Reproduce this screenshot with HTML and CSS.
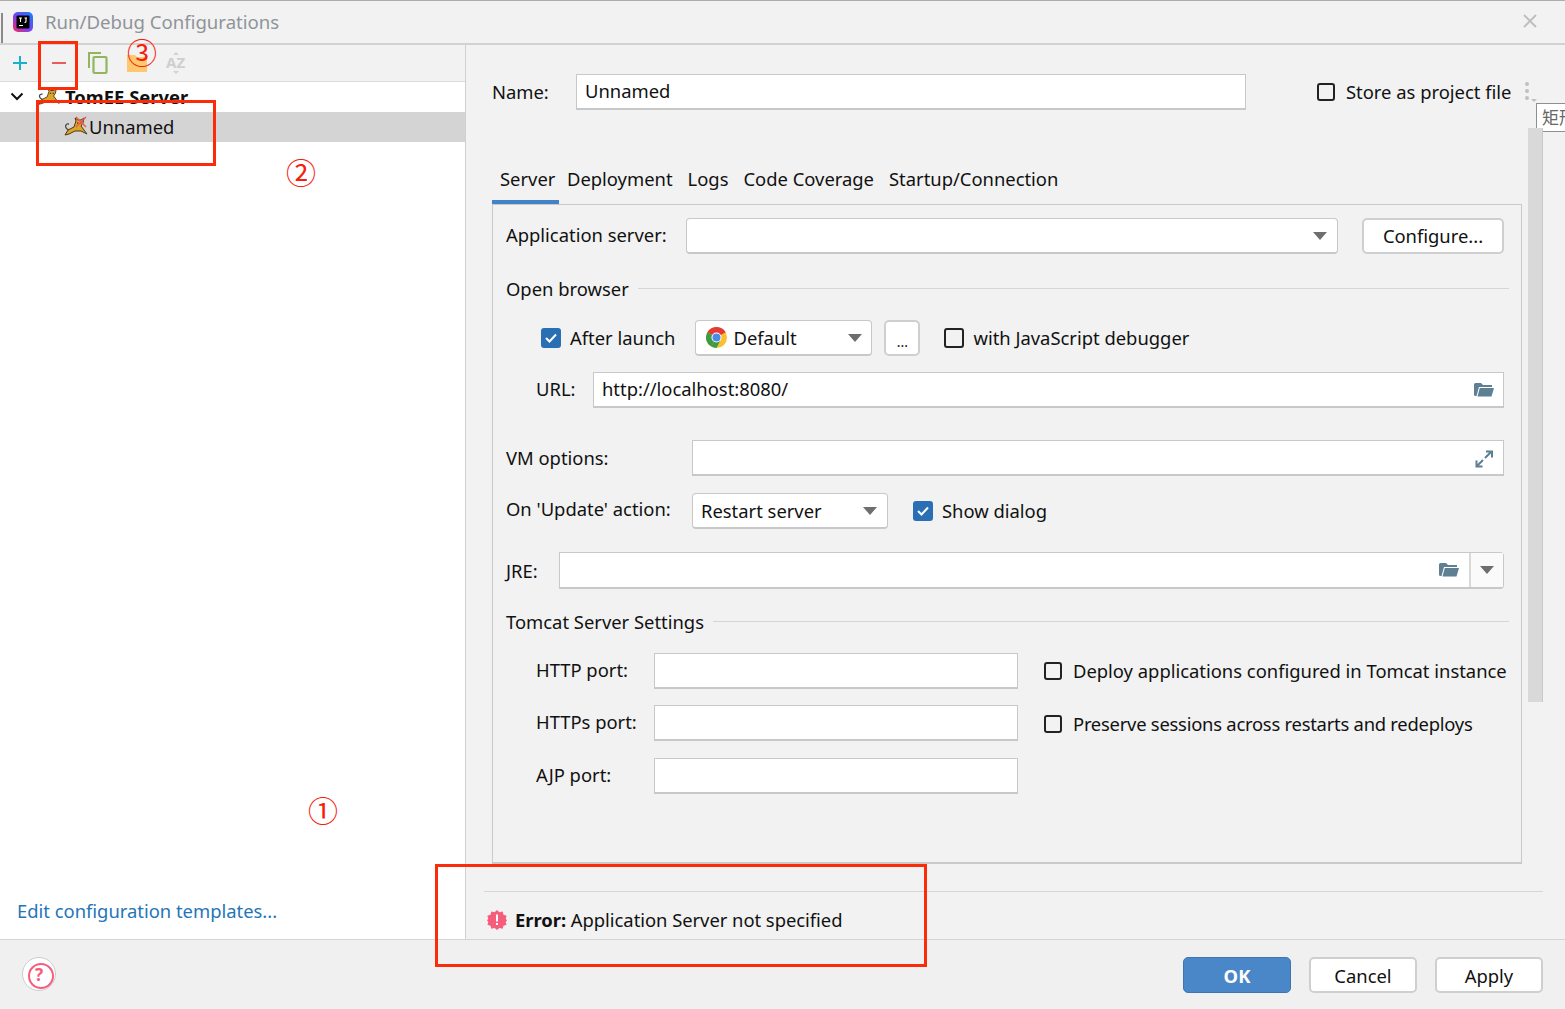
FILE: index.html
```html
<!DOCTYPE html>
<html lang="en">
<head>
<meta charset="utf-8">
<title>Run/Debug Configurations</title>
<link rel="stylesheet" href="styles.css">
</head>
<body>
<svg class="defs" width="0" height="0" aria-hidden="true">
  <defs>
    <g id="cat">
      <path d="M5 14 C0 12 1 7 5 8" fill="none" stroke="#444" stroke-width="1.300"/>
      <path d="M1 19 L4 14 L10 11 L12 5 L11 2 L14 4 L17 4 L20 2 L19 7 L17 10 L23 18 L17 15 L11 15 L5 18 Z" fill="#dca52a" stroke="#4a3812" stroke-width="1"/>
      <path d="M13 7h1.400M16 7h1.400" stroke="#222" stroke-width="1.200"/>
    </g>
    <g id="folder">
      <path d="M1 3.500 Q1 2 2.500 2 H8 L10 4 H19 V6 H6 L3.500 15 H2.500 Q1 15 1 13.500 Z" fill="#5f7f92"/>
      <path d="M6.800 7 H21 L18.500 15.500 H4.500 Z" fill="#5f7f92"/>
    </g>
  </defs>
</svg>
<div class="window">
  <header class="titlebar">
    <span class="caret-mark"></span>
    <svg class="app-logo" width="20" height="20" viewBox="0 0 20 20">
      <defs>
        <linearGradient id="logoGrad" x1="0" y1="1" x2="1" y2="0">
          <stop offset="0" stop-color="#fe2857"/><stop offset=".45" stop-color="#7b3ff2"/><stop offset="1" stop-color="#0a84ff"/>
        </linearGradient>
      </defs>
      <rect width="20" height="20" rx="5" fill="url(#logoGrad)"/>
      <rect x="3.500" y="3.500" width="13" height="13" rx="1" fill="#000"/>
      <path d="M6 6h3M7.500 6v4M11.500 6h2.500M13 6v3.500q0 1-1.500 1M6 13.500h4" stroke="#fff" stroke-width="1.100" fill="none"/>
    </svg>
    <span class="title-text">Run/Debug Configurations</span>
    <svg class="close" width="14" height="14" viewBox="0 0 14 14"><path d="M1 1L13 13M13 1L1 13" stroke="#bdbdbd" stroke-width="1.800"/></svg>
  </header>

  <div class="main">
    <aside class="sidebar">
      <div class="toolbar">
        <svg width="14" height="14" viewBox="0 0 14 14"><path d="M7 0V14M0 7H14" stroke="#17b3c9" stroke-width="2"/></svg>
        <svg class="tb-minus" width="14" height="14" viewBox="0 0 14 14"><path d="M0 7H14" stroke="#e85c5c" stroke-width="2"/></svg>
        <svg class="tb-copy" width="20" height="24" viewBox="0 0 20 24"><path d="M1 17V2H13" fill="none" stroke="#92b65f" stroke-width="2"/><rect x="5.500" y="6" width="13" height="16" rx="1" fill="none" stroke="#92b65f" stroke-width="2.200"/></svg>
        <svg class="tb-folder" width="20" height="19" viewBox="0 0 20 19"><path d="M0 2H8L10 4H20V19H0Z" fill="#ffc86e"/></svg>
        <svg class="tb-az" width="20" height="24" viewBox="0 0 20 24"><path d="M7 4L10 1L13 4ZM7 20L10 23L13 20Z" fill="#d2d2d2"/><text x="0" y="17" class="az-text">AZ</text></svg>
      </div>
      <div class="tree">
        <div class="tree-row tree-group">
          <svg class="chev" width="14" height="9" viewBox="0 0 14 9"><path d="M1.500 1.500L7 7L12.500 1.500" fill="none" stroke="#111" stroke-width="2"/></svg>
          <svg class="cat-g" width="22" height="20" viewBox="0 0 24 20"><use href="#cat"/></svg>
          <span>TomEE Server</span>
        </div>
        <div class="tree-row tree-item">
          <svg class="cat-i" width="24" height="20" viewBox="0 0 24 20"><use href="#cat"/><path d="M12 1L22 11M22 1L12 11" stroke="#f0565a" stroke-width="1.500"/></svg>
          <span>Unnamed</span>
        </div>
      </div>
      <a class="templates" href="#">Edit configuration templates...</a>
    </aside>

    <section class="content">
      <div class="name-row">
        <label class="name-label">Name:</label>
        <div class="field name-field">Unnamed</div>
        <span class="check store"><i class="box"></i>Store as project file</span>
        <span class="dots"><b></b><b></b><b></b></span>
        <i class="dots-tri"></i>
      </div>
      <nav class="tabs">
        <span class="tab active">Server</span>
        <span class="tab">Deployment</span>
        <span class="tab">Logs</span>
        <span class="tab">Code Coverage</span>
        <span class="tab">Startup/Connection</span>
      </nav>
      <div class="panel">
        <div class="row">
          <label class="lbl w-app">Application server:</label>
          <div class="field combo app-combo"><i class="tri"></i></div>
          <button class="btn configure">Configure...</button>
        </div>
        <div class="section s-open"><span>Open browser</span><hr></div>
        <div class="row r-after">
          <span class="check"><i class="box on"><svg width="14" height="12" viewBox="0 0 14 12"><path d="M2 6L5.500 9.500L12 2.500" fill="none" stroke="#fff" stroke-width="2"/></svg></i>After launch</span>
          <div class="field combo default-combo">
            <svg class="chrome" width="21" height="21" viewBox="0 0 21 21">
              <circle cx="10.500" cy="10.500" r="10.500" fill="#fbc02d"/>
              <path d="M10.500 10.500L1.400 5.250A10.500 10.500 0 0 1 19.600 5.250Z" fill="#e53935"/>
              <path d="M10.500 10.500L1.400 5.250A10.500 10.500 0 0 0 5.250 19.600Z" fill="#3d9b46"/>
              <path d="M10.500 10.500L5.250 19.600A10.500 10.500 0 0 0 10.500 21L14 14Z" fill="#3d9b46"/>
              <circle cx="10.500" cy="10.500" r="5" fill="#fff"/><circle cx="10.500" cy="10.500" r="4" fill="#4a8be8"/>
            </svg>
            <span>Default</span><i class="tri"></i>
          </div>
          <button class="btn dots-btn">...</button>
          <span class="check js"><i class="box"></i>with JavaScript debugger</span>
        </div>
        <div class="row r-url">
          <label class="lbl w-url">URL:</label>
          <div class="field url-field"><span class="ftext">http://localhost:8080/</span><svg class="ficon" width="22" height="17" viewBox="0 0 22 17"><use href="#folder"/></svg></div>
        </div>
        <div class="row r-vm">
          <label class="lbl w-vm">VM options:</label>
          <div class="field grow"><svg class="ficon" width="20" height="20" viewBox="0 0 20 20"><path d="M11 9L17 3M12 2.500H18V8.500M9 11L3 17M2.500 11.500V17.500H8.500" fill="none" stroke="#5f7f92" stroke-width="2"/></svg></div>
        </div>
        <div class="row r-upd">
          <label class="lbl w-vm">On 'Update' action:</label>
          <div class="field combo restart-combo"><span>Restart server</span><i class="tri"></i></div>
          <span class="check show"><i class="box on"><svg width="14" height="12" viewBox="0 0 14 12"><path d="M2 6L5.500 9.500L12 2.500" fill="none" stroke="#fff" stroke-width="2"/></svg></i>Show dialog</span>
        </div>
        <div class="row r-jre">
          <label class="lbl w-jre">JRE:</label>
          <div class="field jre-field"><svg class="ficon" width="22" height="17" viewBox="0 0 22 17"><use href="#folder"/></svg><span class="jre-drop"><i class="tri"></i></span></div>
        </div>
        <div class="section s-tomcat"><span>Tomcat Server Settings</span><hr></div>
        <div class="row r-http">
          <label class="lbl w-port">HTTP port:</label>
          <div class="field port"></div>
          <span class="check deploy"><i class="box"></i>Deploy applications configured in Tomcat instance</span>
        </div>
        <div class="row r-https">
          <label class="lbl w-port">HTTPs port:</label>
          <div class="field port"></div>
          <span class="check deploy preserve"><i class="box"></i>Preserve sessions across restarts and redeploys</span>
        </div>
        <div class="row r-ajp">
          <label class="lbl w-port">AJP port:</label>
          <div class="field port"></div>
        </div>
      </div>
      <div class="error">
        <svg width="20" height="20" viewBox="0 0 20 20"><path d="M10 0L12.400 2.300L15.600 1.500L16.500 4.700L19.600 5.700L18.700 8.900L20 10L18.700 12.400L19.600 14.800L16.500 15.800L15.600 18.700L12.400 18L10 20L7.600 18L4.400 18.700L3.500 15.800L.4 14.800L1.300 12.400L0 10L1.300 8.900L.4 5.700L3.500 4.700L4.400 1.500L7.600 2.300Z" fill="#f65c7b"/><rect x="9" y="4.500" width="2" height="7" fill="#fff"/><rect x="9" y="13" width="2" height="2" fill="#fff"/></svg>
        <span class="err-text"><b>Error:</b> Application Server not specified</span>
      </div>
    </section>
  </div>

  <footer class="footer">
    <span class="help">?</span>
    <div class="actions">
      <button class="btn act primary">OK</button>
      <button class="btn act">Cancel</button>
      <button class="btn act">Apply</button>
    </div>
  </footer>

  <div class="tooltip">矩形</div>
  <div class="scrollbar"></div>
  <div class="mark m-minus"></div>
  <div class="mark m-item"></div>
  <div class="mark m-error"></div>
  <span class="num n1">①</span>
  <span class="num n2">②</span>
  <span class="num n3">③</span>
</div>
</body>
</html>
```

FILE: styles.css
```css
* { box-sizing: border-box; }
html, body { margin: 0; padding: 0; }
body { width: 1565px; height: 1009px; overflow: hidden; font-family: "Noto Sans", "Noto Sans CJK SC", sans-serif; font-size: 18.4px; color: #111; background: #f2f2f2; }
.defs { position: absolute; }
.window { position: relative; width: 1565px; height: 1009px; display: flex; flex-direction: column; }

.titlebar { height: 45px; flex: none; display: flex; align-items: center; border-top: 1px solid #acacac; border-bottom: 2px solid #d2d2d2; background: #f2f2f2; }
.caret-mark { width: 2px; height: 30px; margin: 12px 0 0 1px; background: #8a8a8a; }
.app-logo { margin-left: 10px; margin-top: -1px; }
.title-text { margin-left: 12px; color: #8f9499; font-size: 18.6px; line-height: 24px; }
.close { margin-left: auto; margin-right: 28px; margin-top: -2px; }

.main { flex: 1; display: flex; min-height: 0; }
.sidebar { width: 466px; flex: none; background: #fff; border-right: 1px solid #d0d0d0; display: flex; flex-direction: column; }
.toolbar { height: 37px; flex: none; display: flex; align-items: center; padding-left: 13px; background: #f2f2f2; border-bottom: 1px solid #dcdcdc; }
.tb-minus { margin-left: 25px; }
.tb-copy { margin-left: 22px; }
.tb-folder { margin-left: 19px; margin-top: -2px; }
.tb-az { margin-left: 19px; }
.az-text { font-size: 15px; font-weight: 700; fill: #cfcfcf; font-family: "Noto Sans", sans-serif; }

.tree { flex: 1; }
.tree-row { display: flex; align-items: center; }
.tree-group { height: 30px; font-weight: 700; padding-left: 10px; padding-bottom: 2px; }
.cat-g { margin-left: 14px; margin-right: 5px; }
.tree-item { height: 30px; background: #d4d4d4; padding-left: 64px; padding-bottom: 2px; }
.cat-i { margin-right: 1px; }
.templates { margin: 0 0 15px 17px; color: #2475b8; text-decoration: none; line-height: 26px; }

.content { flex: 1; padding-left: 26px; }
.name-row { display: flex; align-items: center; height: 36px; margin-top: 29px; position: relative; }
.name-label { width: 84px; padding-bottom: 2px; }
.field { height: 36px; background: #fff; border: 1px solid #c8c8c8; border-bottom-width: 2px; padding-left: 8px; display: flex; align-items: center; position: relative; }
.name-field { width: 670px; padding-bottom: 2px; }
.check { display: inline-flex; align-items: center; white-space: nowrap; padding-bottom: 2px; }
.box { width: 18px; height: 18px; border: 2px solid #222; border-radius: 3px; margin-right: 11px; display: flex; align-items: center; justify-content: center; background: transparent; flex: none; position: relative; top: 1px; }
.box.on { background: #2a6fb4; border: 0; }
.store { margin-left: 71px; }
.dots { display: flex; flex-direction: column; gap: 3px; margin-left: 14px; margin-top: -2px; }
.dots b { width: 4px; height: 4px; border-radius: 50%; background: #c0c0c0; }
.dots-tri { width: 0; height: 0; border-left: 3px solid transparent; border-right: 3px solid transparent; border-top: 3px solid #c0c0c0; margin: 17px 0 0 2px; }

.tabs { display: flex; height: 61px; margin-top: 33px; margin-right: 43px; align-items: flex-end; gap: 15px; padding-left: 8px; }
.tab { height: 37px; line-height: 23px; white-space: nowrap; flex: none; }
.tab.active { position: relative; width: 52px; }
.tab.active::after { content: ""; position: absolute; left: -8px; right: -7px; bottom: 0; height: 4px; background: #4083c9; }

.panel { width: 1030px; height: 660px; border: 1px solid #c9c9c9; border-bottom-width: 2px; padding: 13px 0 0 13px; }
.row { display: flex; align-items: center; height: 36px; }
.lbl { flex: none; white-space: nowrap; padding-bottom: 3px; }
.w-app { width: 180px; }
.w-url { width: 57px; }
.w-vm { width: 186px; }
.w-jre { width: 53px; }
.w-port { width: 118px; }
.ftext { padding-bottom: 2px; }
.combo { justify-content: space-between; border-radius: 4px; border-bottom-width: 2px; }
.tri { width: 0; height: 0; border-left: 7px solid transparent; border-right: 7px solid transparent; border-top: 8px solid #6e6e6e; flex: none; }
.app-combo { width: 652px; padding-right: 10px; justify-content: flex-end; }
.btn { font: inherit; color: #111; background: #fff; border: 2px solid #cfcfcf; border-radius: 5px; padding: 0; }
.configure { width: 142px; height: 36px; margin-left: 24px; padding-bottom: 2px; }
.section { display: flex; align-items: center; width: 1003px; height: 24px; }
.section hr { flex: 1; height: 1px; border: 0; background: #d6d6d6; margin: 0 0 0 9px; }
.s-open { margin-top: 22px; }
.s-tomcat { margin-top: 20px; }
.r-after { margin-top: 20px; padding-left: 35px; }
.r-after .box { width: 20px; height: 20px; margin-right: 9px; }
.default-combo { width: 177px; margin-left: 20px; justify-content: flex-start; padding-left: 10px; padding-right: 9px; }
.default-combo .tri { margin-left: auto; }
.chrome { margin-right: 6px; }
.dots-btn { width: 36px; height: 36px; margin-left: 12px; font-size: 14px; padding-top: 6px; }
.js { margin-left: 24px; }
.r-url { margin-top: 16px; padding-left: 30px; }
.url-field { width: 911px; }
.ficon { position: absolute; right: 8px; top: 8px; }
.r-vm { margin-top: 32px; }
.r-vm .lbl { padding-bottom: 1px; }
.grow { width: 812px; }
.grow .ficon { right: 9px; }
.r-upd { margin-top: 17px; }
.r-upd .lbl { padding-bottom: 5px; }
.restart-combo { width: 196px; padding-right: 10px; }
.show { margin-left: 25px; }
.show .box { width: 20px; height: 20px; margin-right: 9px; }
.r-jre { margin-top: 23px; height: 37px; }
.r-jre .lbl { padding-bottom: 1px; }
.jre-field { width: 945px; height: 37px; border-radius: 0 4px 4px 0; }
.jre-field .ficon { right: 43px; top: 8px; }
.jre-drop { position: absolute; right: 0; top: 0; bottom: 0; width: 34px; background: #fafafa; border-left: 2px solid #d8d8d8; display: flex; align-items: center; justify-content: center; }
.r-http { margin-top: 20px; padding-left: 30px; }
.r-https { margin-top: 16px; padding-left: 30px; }
.r-ajp { margin-top: 17px; padding-left: 30px; }
.port { width: 364px; }
.deploy { margin-left: 26px; }
.preserve { letter-spacing: -0.24px; padding-bottom: 0; }

.error { position: relative; margin: 27px 22px 0 -8px; padding: 15px 0 0 3px; border-top: 1px solid #d6d6d6; display: flex; align-items: center; gap: 8px; }
.err-text { letter-spacing: -0.03px; }
.err-text b { font-weight: 700; }

.footer { height: 70px; flex: none; display: flex; align-items: center; background: #f0f0f0; border-top: 1px solid #d4d4d4; padding: 1px 22px 0 22px; justify-content: space-between; }
.help { width: 34px; height: 34px; border-radius: 50%; background: #fff; border: 1px solid #cdcdcd; color: #f65c7b; font-size: 17px; font-weight: 700; display: flex; align-items: center; justify-content: center; position: relative; margin-top: -2px; }
.help::after { content: ""; position: absolute; left: 5px; top: 5px; width: 22px; height: 22px; border: 2px solid #f65c7b; border-radius: 50%; }
.actions { display: flex; gap: 18px; }
.act { width: 108px; height: 36px; }
.primary { background: #4a87c8; border: 1px solid #3f76b2; color: #fff; font-weight: 700; }

.tooltip { position: absolute; left: 1536px; top: 103px; width: 40px; height: 29px; background: #fff; border: 1px solid #8f8f8f; padding-left: 5px; font-size: 17px; line-height: 26px; color: #666; font-family: "Noto Sans CJK SC", sans-serif; white-space: nowrap; overflow: hidden; }
.scrollbar { position: absolute; left: 1528px; top: 128px; width: 15px; height: 574px; background: #d9d9d9; border-right: 1px solid #c9c9c9; }
.mark { position: absolute; border: 3px solid #fb2c0a; }
.m-minus { left: 38px; top: 41px; width: 40px; height: 49px; }
.m-item { left: 36px; top: 100px; width: 180px; height: 66px; }
.m-error { left: 435px; top: 864px; width: 492px; height: 103px; }
.num { position: absolute; color: #f5200c; font-family: "Noto Sans CJK SC", sans-serif; font-size: 30px; line-height: 28px; }
.n1 { left: 308px; top: 795px; }
.n2 { left: 286px; top: 157px; }
.n3 { left: 127px; top: 37px; }
```
